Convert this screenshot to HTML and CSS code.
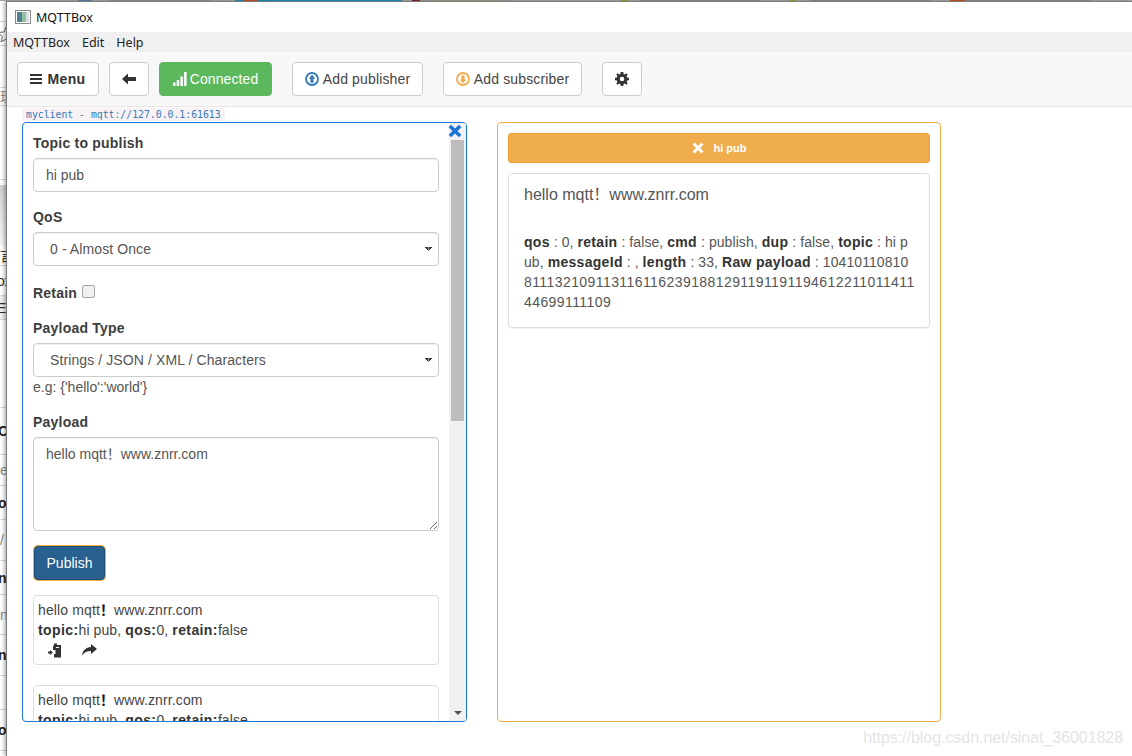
FILE: index.html
```html
<!DOCTYPE html>
<html lang="en">
<head>
<meta charset="utf-8">
<title>MQTTBox</title>
<link rel="stylesheet" href="styles.css">
</head>
<body>
<div class="topstrip"></div>
<div class="desk">
  <div class="strip">
    <div class="row r1"></div>
    <div class="row r2"><svg class="star" width="14" height="16" viewBox="0 0 14 16"><path d="M6 1l2 5 6 .5-4.500 4 1.500 5.500-5-3-5 3 1.500-5.500L-2 6.500 4 6z" fill="none" stroke="#666" stroke-width="1"/></svg></div>
    <div class="row r3"></div>
    <div class="row r4"><span class="bit grey">理</span></div>
    <div class="row r5"></div>
    <div class="row r6"></div>
    <div class="row r7 band"></div>
    <div class="row r8"><span class="bit dark">言</span></div>
    <div class="row r9"><span class="bit dark cut">ox</span></div>
    <div class="row r10 soft"><span class="bit dark cut">Ec</span></div>
    <div class="row r11"></div>
    <div class="row r12"><span class="bit bold">C</span></div>
    <div class="row r13"><span class="bit grey">e</span></div>
    <div class="row r14"><span class="bit bold">o</span></div>
    <div class="row r15"><span class="bit grey">/</span></div>
    <div class="row r16"><span class="bit bold">n</span></div>
    <div class="row r17"><span class="bit grey">n</span></div>
    <div class="row r18"><span class="bit bold">n</span></div>
    <div class="row r19"></div>
    <div class="row r20"><span class="bit bold">o</span></div>
    <div class="row r21"><span class="bit grey">T</span></div>
  </div>

  <div class="window">
    <div class="titlebar">
      <svg class="appicon" width="16" height="14" viewBox="0 0 16 14"><rect x=".5" y=".5" width="15" height="13" fill="#fff" stroke="#8a8a8a"/><rect x="2" y="2" width="5" height="10" fill="#4f7f8f"/><rect x="7" y="2" width="4" height="10" fill="#8fc0a0"/><rect x="11" y="2" width="3" height="10" fill="#d8dde0"/></svg>
      <span>MQTTBox</span>
    </div>
    <div class="menubar"><span>MQTTBox</span><span>Edit</span><span>Help</span></div>
    <div class="toolbar">
      <button class="btn btn-menu"><svg width="12" height="12" viewBox="0 0 12 12"><path d="M0 1h12v2H0zM0 5h12v2H0zM0 9h12v2H0z" fill="#333"/></svg><b>Menu</b></button>
      <button class="btn btn-back"><svg width="14" height="12" viewBox="0 0 14 12"><path d="M0 6l6-5.500V4h8v4H6v3.500z" fill="#333"/></svg></button>
      <button class="btn btn-connected"><svg width="14" height="14" viewBox="0 0 14 14"><path d="M0 10.500h2.500V14H0zM3.700 8h2.500v6H3.700zM7.400 4.500h2.500V14H7.400zM11.100 0h2.500v14h-2.500z" fill="#fff"/></svg>Connected</button>
      <button class="btn btn-pub"><svg width="14" height="14" viewBox="0 0 14 14"><circle cx="7" cy="7" r="6" fill="none" stroke="#337ab7" stroke-width="1.800"/><path d="M7 2.800l3.400 3.700H8.500v4.300h-3V6.500H3.600z" fill="#337ab7"/></svg>Add publisher</button>
      <button class="btn btn-sub"><svg width="14" height="14" viewBox="0 0 14 14"><circle cx="7" cy="7" r="6" fill="none" stroke="#f0ad4e" stroke-width="1.800"/><path d="M7 11.200L3.600 7.500h1.900V3.200h3v4.300h1.900z" fill="#f0ad4e"/></svg>Add subscriber</button>
      <button class="btn btn-gear"><svg width="14" height="14" viewBox="0 0 14 14"><path d="M5.700 0h2.600l.3 1.900 1.200.5L11.400 1.300l1.300 1.300-1.100 1.600.5 1.200 1.900.3v2.600l-1.900.3-.5 1.200 1.100 1.600-1.300 1.300-1.600-1.100-1.200.5-.3 1.900H5.700l-.3-1.900-1.200-.5-1.600 1.100-1.300-1.300 1.100-1.600-.5-1.200L0 8.300V5.700l1.900-.3.500-1.200-1.100-1.600 1.300-1.300 1.600 1.100 1.200-.5zM7 4.700a2.300 2.300 0 1 0 0 4.600 2.300 2.300 0 0 0 0-4.600z" fill="#333" fill-rule="evenodd"/></svg></button>
    </div>

    <div class="content">
      <code class="client">myclient - mqtt://127.0.0.1:61613</code>
      <div class="panels">
        <section class="panel panel-pub">
          <svg class="close" width="14" height="14" viewBox="0 0 14 14"><path d="M3 .8L7 4.600 11 .8 13.400 3.200 9.500 7l3.900 3.800L11 13.200 7 9.400 3 13.200.6 10.800 4.500 7 .6 3.200z" fill="#1a76d6"/></svg>
          <div class="scroller">
            <div class="group"><label class="lab">Topic to publish</label><input class="control" value="hi pub"></div>
            <div class="group"><label class="lab">QoS</label><select class="control sel"><option>0 - Almost Once</option></select></div>
            <div class="group retain"><label class="lab inline">Retain</label><input type="checkbox" class="check"></div>
            <div class="group"><label class="lab">Payload Type</label><select class="control sel"><option>Strings / JSON / XML / Characters</option></select><div class="help">e.g: {'hello':'world'}</div></div>
            <div class="group"><label class="lab">Payload</label><textarea class="control area">hello mqtt！www.znrr.com</textarea></div>
            <button class="publish">Publish</button>
            <div class="msg"><div class="msgtext">hello mqtt<b class="bang">！</b>www.znrr.com</div><div class="msgmeta"><b>topic:</b>hi pub, <b>qos:</b>0, <b>retain:</b>false</div><div class="actions"><svg width="14" height="16" viewBox="0 0 14 16"><path d="M6 3V1.500h3V3h4v12.500H6V12h1.500V8H5V4.500z" fill="#333"/><path d="M8 5h3v1H8z" fill="#fff"/><path d="M0 9.500h2V8l3 2.500L2 13v-1.500H0z" fill="#333"/></svg><svg width="15" height="12" viewBox="0 0 15 12"><path d="M9 0l6 5-6 5V7C5 7 2.200 8.200 0 11.500 .6 6.500 4 3.300 9 3z" fill="#333"/></svg></div></div>
            <div class="msg"><div class="msgtext">hello mqtt<b class="bang">！</b>www.znrr.com</div><div class="msgmeta"><b>topic:</b>hi pub, <b>qos:</b>0, <b>retain:</b>false</div></div>
          </div>
          <div class="bar"><div class="bar-top"></div><div class="thumb"></div><div class="bar-rest"></div><div class="bar-end"><span class="tri"></span></div></div>
        </section>
        <section class="panel panel-sub">
          <button class="subhead"><svg width="12" height="12" viewBox="0 0 12 12"><path d="M2.500.6L6 4 9.500.6 11.500 2.600 8 6l3.500 3.400-2 2L6 8l-3.500 3.400-2-2L4 6 .5 2.600z" fill="#fff"/></svg><b>hi pub</b></button>
          <div class="received">
            <div class="payload">hello mqtt！www.znrr.com</div>
            <div class="meta"><b>qos</b> : 0, <b>retain</b> : false, <b>cmd</b> : publish, <b>dup</b> : false, <b>topic</b> : hi p<br>ub, <b>messageId</b> : , <b>length</b> : 33, <b>Raw payload</b> : 10410110810<br><span class="digits">8111321091131161162391881291191191194612211011411</span><br><span class="digits">44699111109</span></div>
          </div>
        </section>
      </div>
    </div>
  </div>
</div>
<div class="watermark">https://blog.csdn.net/sinat_36001828</div>
</body>
</html>
```
FILE: styles.css
```css
* { box-sizing: border-box; }
html, body { margin: 0; height: 756px; overflow: hidden; }
body {
  position: relative;
  background: #fff;
  color: #333;
  font: 14px/20px "Liberation Sans", "Noto Sans CJK SC", sans-serif;
  display: flex;
  flex-direction: column;
}
.topstrip {
  height: 1px;
  flex: none;
  background: linear-gradient(90deg,
    #a8a8a8 0, #a8a8a8 78px, #5b87a8 78px, #5b87a8 92px, #a8a8a8 92px, #a8a8a8 110px,
    #9a9488 110px, #9a9488 210px, #a8a8a8 210px, #a8a8a8 235px,
    #1593bd 235px, #1593bd 243px, #cf4a24 243px, #cf4a24 258px, #1593bd 258px, #1593bd 402px,
    #a8a8a8 402px, #a8a8a8 412px, #8f2028 412px, #8f2028 420px, #a39c90 420px, #a39c90 510px, #a8a8a8 510px, #a8a8a8 621px,
    #9aa82c 621px, #9aa82c 628px, #a8a8a8 628px, #a8a8a8 640px, #8f8f98 640px, #8f8f98 760px, #a8a8a8 760px, #a8a8a8 790px,
    #9aa82c 790px, #9aa82c 795px, #a8a8a8 795px, #a8a8a8 810px, #8f8f98 810px, #8f8f98 930px, #a8a8a8 930px, #a8a8a8 950px,
    #cf4a24 950px, #cf4a24 965px, #8f8f98 965px, #8f8f98 1090px, #a8a8a8 1090px);
}
.desk { flex: 1; display: flex; min-height: 0; }

/* sliver of the window behind */
.strip { width: 6px; flex: none; overflow: hidden; display: flex; flex-direction: column; background: #fff; }
.row { flex: none; border-bottom: 1px solid #d4d4d4; overflow: hidden; position: relative; display: flex; align-items: center; }
.bit { font-size: 14px; white-space: nowrap; line-height: 14px; }
.grey { color: #888; }
.dark { color: #333; }
.bold { color: #222; font-weight: 700; margin-left: -2px; }
.cut { margin-left: -3px; }
.star { flex: none; }
.r1 { height: 21px; }
.r2 { height: 24px; }
.r3 { height: 42px; }
.r4 { height: 18px; }
.r5 { height: 74px; }
.r6 { height: 6px; }
.r7 { height: 60px; background: linear-gradient(#d0d0d0, #f4f4f4); border-bottom: 0; }
.r8 { height: 20px; }
.r9 { height: 30px; }
.r10 { height: 24px; background: #eee; }
.r11 { height: 88px; }
.r12 { height: 47px; }
.r13 { height: 31px; }
.r14 { height: 34px; }
.r15 { height: 41px; }
.r16 { height: 34px; }
.r17 { height: 40px; }
.r18 { height: 41px; }
.r19 { height: 34px; }
.r20 { height: 41px; }
.r21 { height: 24px; border-bottom: 0; }

/* app window */
.window {
  position: relative;
  flex: 1;
  min-width: 0;
  display: flex;
  flex-direction: column;
  background: #fff;
  border-left: 1px solid #7d7d7d;
  border-top: 1px solid #7d7d7d;
  box-shadow: -2px 0 3px rgba(0,0,0,.28);
}
.titlebar {
  height: 30px;
  flex: none;
  padding-left: 8px;
  display: flex;
  align-items: center;
  gap: 5px;
  font: 12.500px "Noto Sans", sans-serif;
  color: #111;
}
.menubar {
  height: 20px;
  flex: none;
  background: #f0f0f0;
  padding-left: 6px;
  display: flex;
  align-items: center;
  gap: 12px;
  font: 12.500px "Noto Sans", sans-serif;
  color: #222;
}
.toolbar {
  height: 55px;
  flex: none;
  background: #f8f8f8;
  border-bottom: 1px solid #e7e7e7;
  padding: 10px 0 0 10px;
  display: flex;
  align-items: flex-start;
}
.btn {
  height: 34px;
  padding: 0;
  border: 1px solid #ccc;
  border-radius: 4px;
  background: #fff;
  color: #333;
  font: 14px/20px "Liberation Sans", sans-serif;
  display: flex;
  align-items: center;
  justify-content: center;
  flex: none;
}
.btn b { letter-spacing: .4px; }
.btn-menu { width: 82px; gap: 5px; }
.btn-back { width: 40px; margin-left: 10px; }
.btn-connected { width: 113px; margin-left: 10px; gap: 3px; letter-spacing: .1px; background: #5cb85c; border-color: #5cb85c; color: #fff; }
.btn-pub { width: 131px; margin-left: 20px; gap: 4px; letter-spacing: .15px; color: #444; }
.btn-sub { width: 139px; margin-left: 20px; gap: 4px; letter-spacing: .15px; color: #444; }
.btn-gear { width: 40px; margin-left: 20px; }

.content { flex: 1; min-height: 0; padding-left: 15px; display: flex; flex-direction: column; align-items: flex-start; }
.client {
  height: 13px;
  margin-top: 1px;
  padding: 0 4px;
  background: #f9f2f4;
  color: #337ab7;
  border-radius: 2px;
  font: 9.800px/13px "DejaVu Sans Mono", monospace;
  white-space: nowrap;
}
.panels { margin-top: 1px; display: flex; gap: 30px; }
.panel { height: 600px; border-radius: 4px; background: #fff; position: relative; }
.panel-pub { width: 445px; border: 1px solid #1a76d6; overflow: hidden; display: flex; }
.panel-sub { width: 444px; border: 1px solid #f0ad4e; padding: 10px; }
.close { position: absolute; top: 1px; right: 4px; z-index: 2; }

.scroller { flex: 1; min-width: 0; overflow: hidden; padding: 10px 10px 0; }
.bar { width: 17px; flex: none; background: #f1f1f1; display: flex; flex-direction: column; }
.bar-top { height: 17px; flex: none; }
.thumb { height: 281px; flex: none; margin: 0 2px; background: #bdbdbd; }
.bar-rest { flex: 1; }
.bar-end { height: 17px; flex: none; display: flex; align-items: center; justify-content: center; }
.tri { width: 0; height: 0; border-left: 4px solid transparent; border-right: 4px solid transparent; border-top: 4px solid #505050; }

.group { margin-bottom: 15px; }
.lab { display: block; height: 20px; margin-bottom: 5px; font-weight: 700; letter-spacing: .22px; color: #3d3d3d; }
.lab.inline { display: inline-block; margin: 0 5px 0 0; vertical-align: top; }
.retain { margin-top: 17px; height: 20px; display: flex; align-items: flex-start; }
.check {
  appearance: none;
  margin: 2px 0 0 0;
  width: 13px;
  height: 13px;
  flex: none;
  background: #f0f0f0;
  border: 1px solid #a5a5a5;
  border-radius: 2px;
}
.control {
  display: block;
  width: 100%;
  height: 34px;
  padding: 6px 12px;
  border: 1px solid #ccc;
  border-radius: 4px;
  background: #fff;
  color: #555;
  font: 14px/20px "Liberation Sans", "Noto Sans CJK SC", sans-serif;
  box-shadow: inset 0 1px 1px rgba(0,0,0,.075);
}
.sel {
  appearance: none;
  padding-left: 16px;
  letter-spacing: .1px;
  background-image:
    linear-gradient(to top right, transparent 50%, #333 50%),
    linear-gradient(to top left, transparent 50%, #333 50%);
  background-size: 3.500px 4px, 3.500px 4px;
  background-position: 391px 14px, 394.500px 14px;
  background-repeat: no-repeat;
}
.area { height: 94px; resize: vertical; }
.help { color: #555; height: 20px; }
.publish {
  display: block;
  width: 71px;
  height: 34px;
  margin: 0 0 15px 1px;
  padding: 0;
  border: 1px solid #204d74;
  border-radius: 4px;
  background: #286090;
  color: #fff;
  font: 14px/20px "Liberation Sans", sans-serif;
  box-shadow: 0 0 0 1px #f0ad4e;
}
.msg {
  height: 70px;
  margin-bottom: 20px;
  padding: 4px;
  border: 1px solid #ddd;
  border-radius: 4px;
  color: #444;
}
.msg b { color: #333; }
.msgtext { letter-spacing: .12px; }
.msgmeta { letter-spacing: .1px; }
.msgmeta b { letter-spacing: .4px; }
.msg .bang { color: #111; }
.actions { height: 20px; padding-left: 10px; display: flex; align-items: center; gap: 20px; }

.subhead {
  width: 100%;
  height: 30px;
  padding: 0;
  border: 1px solid #eea236;
  border-radius: 3px;
  background: #f0ad4e;
  color: #fff;
  font: 700 11px/14px "Liberation Sans", sans-serif;
  display: flex;
  align-items: center;
  justify-content: center;
  gap: 10px;
}
.received {
  margin-top: 10px;
  height: 155px;
  padding: 10px 15px 15px;
  border: 1px solid #ddd;
  border-radius: 4px;
  box-shadow: 0 1px 1px rgba(0,0,0,.05);
  color: #555;
}
.payload { font-size: 16px; line-height: 22px; margin-bottom: 26px; }
.meta { white-space: nowrap; letter-spacing: .08px; }
.meta b { color: #333; letter-spacing: .3px; }
.digits { letter-spacing: .42px; }

.watermark {
  position: absolute;
  right: 9px;
  bottom: 8px;
  color: #e4e4e4;
  font-size: 15.900px;
  line-height: 20px;
  white-space: nowrap;
}
```
